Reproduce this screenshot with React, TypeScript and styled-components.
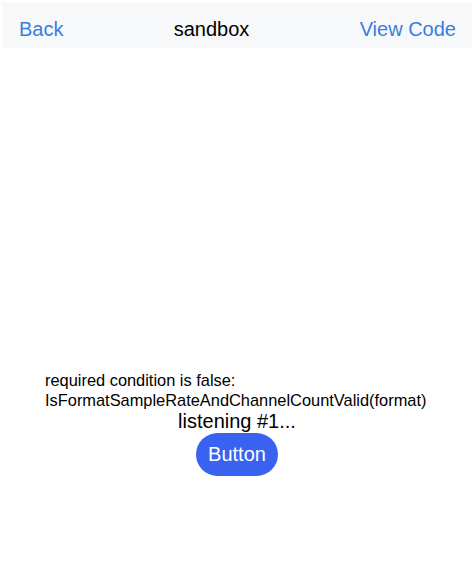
import styled, { createGlobalStyle } from "styled-components";

const GlobalStyle = createGlobalStyle`
  html, body {
    margin: 0;
    padding: 0;
    background: #ffffff;
    font-family: "Liberation Sans", Arial, sans-serif;
  }
`;

const Page = styled.div`
  width: 474px;
  height: 568px;
  display: flex;
  flex-direction: column;
  background: #ffffff;
`;

const NavBar = styled.div`
  margin: 2px 2px 0;
  height: 46px;
  box-sizing: border-box;
  display: flex;
  align-items: center;
  justify-content: space-between;
  padding: 8px 16px 0 17px;
  background: #f7f8f9;
`;

const NavLink = styled.span`
  font-size: 20px;
  color: #3a7de0;
`;

const NavTitle = styled.span`
  font-size: 20px;
  color: #000000;
`;

const Content = styled.div`
  flex: 1;
  display: flex;
  flex-direction: column;
  align-items: center;
  padding-top: 322px;
`;

const ErrorText = styled.div`
  font-size: 16.4px;
  line-height: 20px;
  color: #000000;
  width: 384px;
`;

const Status = styled.div`
  font-size: 20px;
  line-height: 23px;
  color: #000000;
`;

const PillButton = styled.button`
  height: 43px;
  padding: 0 12px;
  border: none;
  border-radius: 22px;
  background: #3a62f0;
  color: #ffffff;
  font-family: "Liberation Sans", Arial, sans-serif;
  font-size: 20px;
`;

export default function App() {
  return (
    <Page>
      <GlobalStyle />
      <NavBar>
        <NavLink>Back</NavLink>
        <NavTitle>sandbox</NavTitle>
        <NavLink>View Code</NavLink>
      </NavBar>
      <Content>
        <ErrorText>
          required condition is false:
          <br />
          IsFormatSampleRateAndChannelCountValid(format)
        </ErrorText>
        <Status>listening #1...</Status>
        <PillButton>Button</PillButton>
      </Content>
    </Page>
  );
}
